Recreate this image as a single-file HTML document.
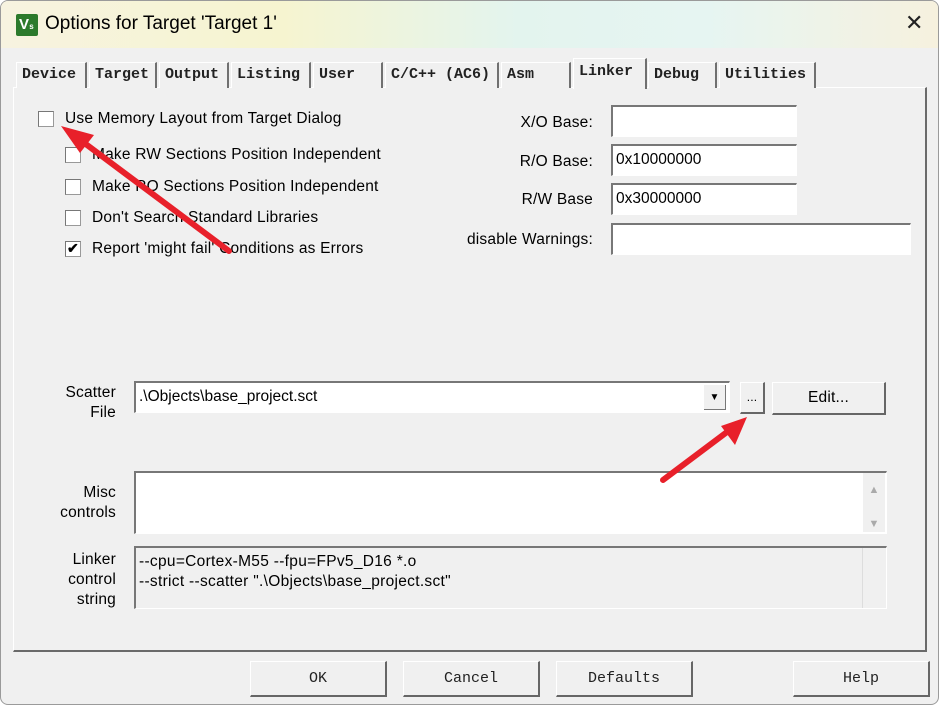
<!DOCTYPE html>
<html><head><meta charset="utf-8"><style>
*{margin:0;padding:0;box-sizing:border-box}
body{width:939px;height:705px;background:#fff;position:relative;overflow:hidden;font-family:"Liberation Sans",sans-serif;font-size:15.5px;color:#000;letter-spacing:0.2px}
.win{position:absolute;left:0;top:0;width:939px;height:705px;background:#f0f0f0;border:1px solid #9a9a9a;border-radius:8px;overflow:hidden}
.title{position:absolute;left:0;top:0;width:939px;height:47px;background:linear-gradient(90deg,#f7f3e0 0%,#f6f4d0 30%,#e3f4ee 55%,#e6f5f2 75%,#f6f1de 100%)}
.a{position:absolute}
.mono{font-family:"Liberation Mono",monospace;font-size:15px;letter-spacing:0;font-weight:bold;color:#222}
.tab{position:absolute;top:61px;height:26px;border-left:1px solid #fff;border-top:1px solid #fff;border-right:2px solid #707070;padding:3px 0 0 5px;background:#f0f0f0}
.panel{position:absolute;left:12px;top:86px;width:914px;height:565px;border-left:1px solid #fff;border-top:1px solid #fff;border-right:2px solid #6a6a6a;border-bottom:2px solid #6a6a6a}
.edit{position:absolute;background:#fff;border-top:2px solid #777;border-left:2px solid #777;border-right:1px solid #fff;border-bottom:1px solid #fff;padding:5px 3px 2px;font-size:15.5px;letter-spacing:0}
.lbl{position:absolute;text-align:right}
.cb{position:absolute;width:16px;height:16px;background:#fff;border:1px solid #999;border-top-color:#777;border-left-color:#777}
.btn{position:absolute;background:#f0f0f0;border-top:1px solid #fff;border-left:1px solid #fff;border-right:2px solid #666;border-bottom:2px solid #666;text-align:center}
</style></head><body>
<div class="win">
<div class="title"></div>
<div class="a" style="left:15px;top:13px;width:22px;height:22px;background:#2c7a2c;border-radius:2px;color:#fff;font-weight:bold;font-size:15px;line-height:22px;padding-left:3px">V<span style="font-size:8px">s</span></div>
<div class="a" style="left:44px;top:12px;font-size:19px;letter-spacing:0">Options for Target 'Target 1'</div>
<div class="a" style="left:904px;top:9px;font-size:22px;font-weight:normal;color:#222">✕</div>

<div class="panel"></div>
<div class="tab mono" style="left:15px;width:71px">Device</div>
<div class="tab mono" style="left:88px;width:68px">Target</div>
<div class="tab mono" style="left:158px;width:70px">Output</div>
<div class="tab mono" style="left:230px;width:80px">Listing</div>
<div class="tab mono" style="left:312px;width:70px">User</div>
<div class="tab mono" style="left:384px;width:114px">C/C++ (AC6)</div>
<div class="tab mono" style="left:500px;width:70px">Asm</div>
<div class="tab mono" style="left:572px;top:57px;height:31px;width:74px;border-bottom:none;padding-top:4px">Linker</div>
<div class="tab mono" style="left:647px;width:69px">Debug</div>
<div class="tab mono" style="left:718px;width:97px">Utilities</div>

<div class="cb" style="left:37px;top:110px"></div>
<div class="a" style="left:64px;top:109px">Use Memory Layout from Target Dialog</div>
<div class="cb" style="left:64px;top:146px"></div>
<div class="a" style="left:91px;top:145px">Make RW Sections Position Independent</div>
<div class="cb" style="left:64px;top:178px"></div>
<div class="a" style="left:91px;top:177px">Make RO Sections Position Independent</div>
<div class="cb" style="left:64px;top:209px"></div>
<div class="a" style="left:91px;top:208px">Don't Search Standard Libraries</div>
<div class="cb" style="left:64px;top:240px;font-size:14px;line-height:13px;text-align:center;font-weight:bold">✔</div>
<div class="a" style="left:91px;top:239px">Report 'might fail' Conditions as Errors</div>

<div class="lbl" style="right:345px;top:113px">X/O Base:</div>
<div class="lbl" style="right:345px;top:152px">R/O Base:</div>
<div class="lbl" style="right:345px;top:190px">R/W Base</div>
<div class="lbl" style="right:345px;top:230px">disable Warnings:</div>
<div class="edit" style="left:610px;top:104px;width:186px;height:32px"></div>
<div class="edit" style="left:610px;top:143px;width:186px;height:32px">0x10000000</div>
<div class="edit" style="left:610px;top:182px;width:186px;height:32px">0x30000000</div>
<div class="edit" style="left:610px;top:222px;width:300px;height:32px"></div>

<div class="lbl" style="left:40px;width:75px;top:382px;line-height:20px">Scatter<br>File</div>
<div class="edit" style="left:133px;top:380px;width:596px;height:32px;padding-top:5px">.\Objects\base_project.sct</div>
<div class="a" style="left:703px;top:384px;width:22px;height:25px;background:#f0f0f0;border-right:1px solid #777;border-bottom:1px solid #777;font-size:10px;text-align:center;line-height:25px">▼</div>
<div class="btn" style="left:739px;top:381px;width:25px;height:32px;line-height:28px;font-size:12px">...</div>
<div class="btn" style="left:771px;top:381px;width:114px;height:33px;line-height:30px">Edit...</div>

<div class="lbl" style="left:40px;width:75px;top:482px;line-height:20px">Misc<br>controls</div>
<div class="edit" style="left:133px;top:470px;width:753px;height:63px"></div>
<div class="a" style="left:862px;top:472px;width:22px;height:59px;background:#f0f0f0;color:#aaa;font-size:11px;text-align:center;line-height:34px">▲<br>▼</div>

<div class="lbl" style="left:40px;width:75px;top:549px;line-height:20px">Linker<br>control<br>string</div>
<div class="edit" style="left:133px;top:545px;width:753px;height:63px;background:#f0f0f0;line-height:20px;padding-top:4px;letter-spacing:0.3px">--cpu=Cortex-M55 --fpu=FPv5_D16 *.o<br>--strict --scatter ".\Objects\base_project.sct"</div>
<div class="a" style="left:861px;top:547px;width:1px;height:60px;background:#ddd"></div>

<div class="btn mono" style="left:249px;top:660px;width:137px;height:36px;line-height:33px;font-weight:normal">OK</div>
<div class="btn mono" style="left:402px;top:660px;width:137px;height:36px;line-height:33px;font-weight:normal">Cancel</div>
<div class="btn mono" style="left:555px;top:660px;width:137px;height:36px;line-height:33px;font-weight:normal">Defaults</div>
<div class="btn mono" style="left:792px;top:660px;width:137px;height:36px;line-height:33px;font-weight:normal">Help</div>

<svg class="a" style="left:0;top:0" width="939" height="705">
<g stroke="#e8202a" stroke-width="6" stroke-linecap="round" fill="#e8202a">
<line x1="228" y1="250" x2="78" y2="138"/>
<line x1="662" y1="479" x2="730" y2="428"/>
</g>
<polygon points="60,125 93,134 79,152" fill="#e8202a"/>
<polygon points="746,416 734,444 720,425" fill="#e8202a"/>
</svg>
</div>
</body></html>
